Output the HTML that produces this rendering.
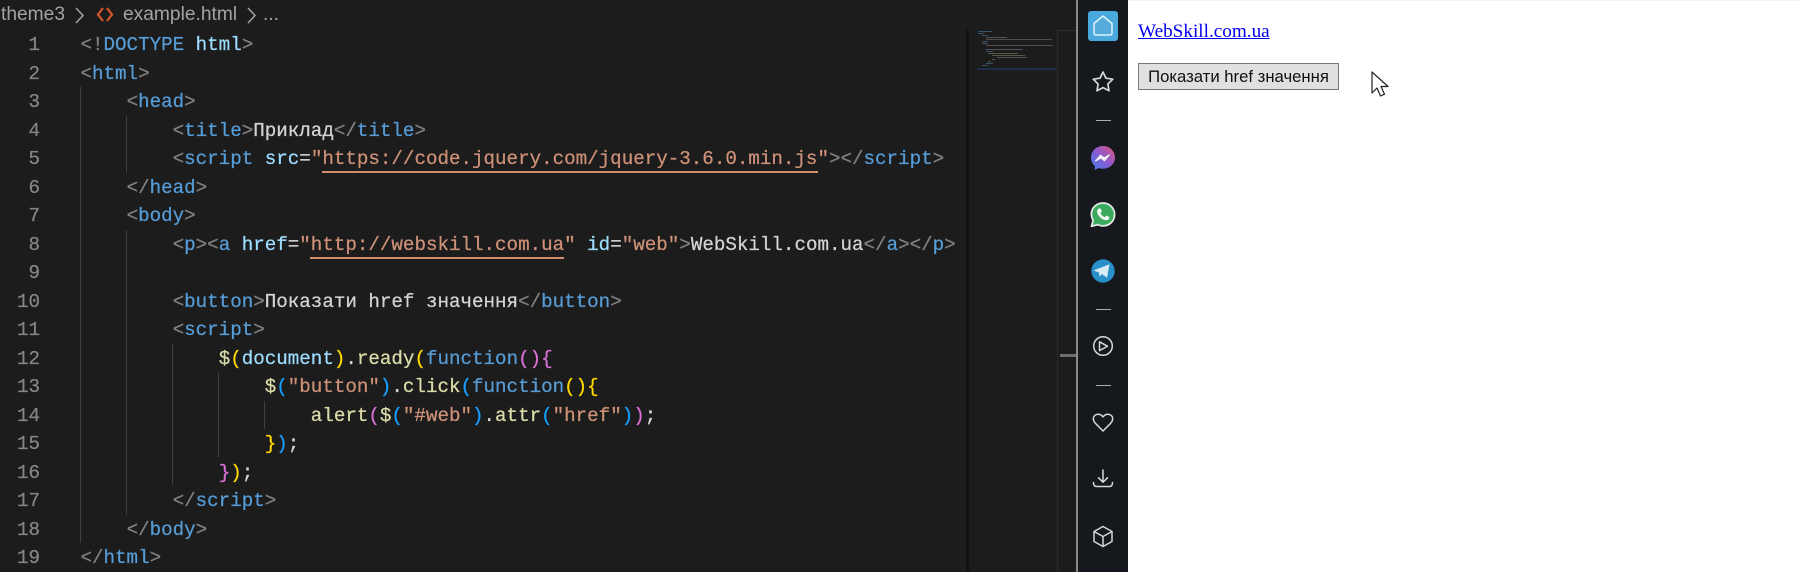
<!DOCTYPE html>
<html lang="uk"><head><meta charset="utf-8"><title>example.html</title>
<style>
html,body{margin:0;padding:0;width:1802px;height:572px;overflow:hidden;background:#fff}
#ed{position:absolute;left:0;top:0;width:1076px;height:572px;background:#1c1c1c;overflow:hidden}
.l{position:absolute;left:80.5px;white-space:pre;font:19.2px/28.5px "Liberation Mono","DejaVu Sans Mono",monospace;color:#d4d4d4;height:28.5px;-webkit-text-stroke:.25px currentColor}
.n{position:absolute;left:0;width:40px;text-align:right;font:19.2px/28.5px "Liberation Mono","DejaVu Sans Mono",monospace;color:#858585;-webkit-text-stroke:.25px currentColor}
.g{color:#808080}.t{color:#569cd6}.a{color:#9cdcfe}.s{color:#ce9178}.f{color:#dcdcaa}.y{color:#ffd700}.m{color:#da70d6}.b{color:#179fff}
.u{position:absolute;height:2px;background:#d08c6b}
.i{position:absolute;width:1px;background:#404040}
.bc{position:absolute;top:2px;font:19.2px/26px "Liberation Sans",sans-serif;color:#a3a3a3;white-space:pre}
.mm{position:absolute;height:1px;opacity:.5}
#side{position:absolute;left:1078px;top:0;width:50px;height:572px;background:#15191d}
#div{position:absolute;left:1076px;top:0;width:2px;height:572px;background:#8a8a8a}
.sep{position:absolute;left:18px;width:15px;height:1px;background:#a9acae}
#side svg{position:absolute;left:0;top:0}
#lnk{position:absolute;left:1138px;top:20px;font:19.2px/24px "Liberation Serif",serif;color:#00e;text-decoration:underline}
#btn{position:absolute;left:1138px;top:63px;width:201px;height:27px;box-sizing:border-box;border:1px solid #767676;background:#e0e0e0;font:16.7px/25px "Liberation Sans",sans-serif;color:#111;text-align:center;white-space:pre}
</style></head><body>
<div id="ed">
<div class="bc" style="left:1px">theme3</div>
<svg style="position:absolute;left:0;top:0" width="300" height="30" fill="none">
<path d="M76 8l7 7.500-7 7.500M248 8l7 7.500-7 7.500" stroke="#a3a3a3" stroke-width="1.500"/>
<path d="M103 8l-5 6.500 5 6.500M107 8l5 6.500-5 6.500" stroke="#d8562c" stroke-width="2.200"/>
</svg>
<div class="bc" style="left:123px">example.html</div>
<div class="bc" style="left:263px">...</div>

<div class="n" style="top:31px">1</div><div class="n" style="top:59.5px">2</div><div class="n" style="top:88px">3</div><div class="n" style="top:116.5px">4</div><div class="n" style="top:145px">5</div><div class="n" style="top:173.5px">6</div><div class="n" style="top:202px">7</div><div class="n" style="top:230.5px">8</div><div class="n" style="top:259px">9</div><div class="n" style="top:287.5px">10</div><div class="n" style="top:316px">11</div><div class="n" style="top:344.5px">12</div><div class="n" style="top:373px">13</div><div class="n" style="top:401.5px">14</div><div class="n" style="top:430px">15</div><div class="n" style="top:458.5px">16</div><div class="n" style="top:487px">17</div><div class="n" style="top:515.5px">18</div><div class="n" style="top:544px">19</div>

<div class="i" style="left:80px;top:87px;height:456px"></div>
<div class="i" style="left:126px;top:116px;height:57px"></div>
<div class="i" style="left:126px;top:230px;height:285px"></div>
<div class="i" style="left:172px;top:344px;height:141px"></div>
<div class="i" style="left:218px;top:372px;height:85px"></div>
<div class="i" style="left:264px;top:401px;height:28px"></div>

<div class="l" style="top:31px"><span class="g">&lt;!</span><span class="t">DOCTYPE</span> <span class="a">html</span><span class="g">&gt;</span></div>
<div class="l" style="top:59.5px"><span class="g">&lt;</span><span class="t">html</span><span class="g">&gt;</span></div>
<div class="l" style="top:88px">    <span class="g">&lt;</span><span class="t">head</span><span class="g">&gt;</span></div>
<div class="l" style="top:116.5px">        <span class="g">&lt;</span><span class="t">title</span><span class="g">&gt;</span>Приклад<span class="g">&lt;/</span><span class="t">title</span><span class="g">&gt;</span></div>
<div class="l" style="top:145px">        <span class="g">&lt;</span><span class="t">script</span> <span class="a">src</span>=<span class="s">"https://code.jquery.com/jquery-3.6.0.min.js"</span><span class="g">&gt;&lt;/</span><span class="t">script</span><span class="g">&gt;</span></div>
<div class="l" style="top:173.5px">    <span class="g">&lt;/</span><span class="t">head</span><span class="g">&gt;</span></div>
<div class="l" style="top:202px">    <span class="g">&lt;</span><span class="t">body</span><span class="g">&gt;</span></div>
<div class="l" style="top:230.5px">        <span class="g">&lt;</span><span class="t">p</span><span class="g">&gt;&lt;</span><span class="t">a</span> <span class="a">href</span>=<span class="s">"http://webskill.com.ua"</span> <span class="a">id</span>=<span class="s">"web"</span><span class="g">&gt;</span>WebSkill.com.ua<span class="g">&lt;/</span><span class="t">a</span><span class="g">&gt;&lt;/</span><span class="t">p</span><span class="g">&gt;</span></div>
<div class="l" style="top:287.5px">        <span class="g">&lt;</span><span class="t">button</span><span class="g">&gt;</span>Показати href значення<span class="g">&lt;/</span><span class="t">button</span><span class="g">&gt;</span></div>
<div class="l" style="top:316px">        <span class="g">&lt;</span><span class="t">script</span><span class="g">&gt;</span></div>
<div class="l" style="top:344.5px">            <span class="f">$</span><span class="y">(</span><span class="a">document</span><span class="y">)</span>.<span class="f">ready</span><span class="y">(</span><span class="t">function</span><span class="m">()</span><span class="m">{</span></div>
<div class="l" style="top:373px">                <span class="f">$</span><span class="b">(</span><span class="s">"button"</span><span class="b">)</span>.<span class="f">click</span><span class="b">(</span><span class="t">function</span><span class="y">()</span><span class="y">{</span></div>
<div class="l" style="top:401.5px">                    <span class="f">alert</span><span class="m">(</span><span class="f">$</span><span class="b">(</span><span class="s">"#web"</span><span class="b">)</span>.<span class="f">attr</span><span class="b">(</span><span class="s">"href"</span><span class="b">)</span><span class="m">)</span>;</div>
<div class="l" style="top:430px">                <span class="y">}</span><span class="b">)</span>;</div>
<div class="l" style="top:458.5px">            <span class="m">}</span><span class="y">)</span>;</div>
<div class="l" style="top:487px">        <span class="g">&lt;/</span><span class="t">script</span><span class="g">&gt;</span></div>
<div class="l" style="top:515.5px">    <span class="g">&lt;/</span><span class="t">body</span><span class="g">&gt;</span></div>
<div class="l" style="top:544px"><span class="g">&lt;/</span><span class="t">html</span><span class="g">&gt;</span></div>

<div class="u" style="left:322px;top:171px;width:496px"></div>
<div class="u" style="left:310px;top:257px;width:254px"></div>

<div style="position:absolute;left:966px;top:30px;width:3px;height:542px;background:#111"></div>
<div class="mm" style="left:978px;top:31px;width:14px;background:#5b87b0"></div>
<div class="mm" style="left:978px;top:33px;width:6px;background:#5b87b0"></div>
<div class="mm" style="left:982px;top:35px;width:6px;background:#5b87b0"></div>
<div class="mm" style="left:986px;top:37px;width:21px;background:#7d8f9c"></div>
<div class="mm" style="left:986px;top:39px;width:66px;background:#8f7a6d"></div>
<div class="mm" style="left:982px;top:41px;width:6px;background:#5b87b0"></div>
<div class="mm" style="left:982px;top:43px;width:6px;background:#5b87b0"></div>
<div class="mm" style="left:986px;top:45px;width:67px;background:#8f7a6d"></div>
<div class="mm" style="left:986px;top:49px;width:37px;background:#7d8f9c"></div>
<div class="mm" style="left:986px;top:51px;width:7px;background:#5b87b0"></div>
<div class="mm" style="left:988px;top:53px;width:30px;background:#8f8f70"></div>
<div class="mm" style="left:992px;top:55px;width:33px;background:#8f8f70"></div>
<div class="mm" style="left:997px;top:57px;width:30px;background:#8f8f70"></div>
<div class="mm" style="left:992px;top:59px;width:3px;background:#8f8f70"></div>
<div class="mm" style="left:988px;top:61px;width:3px;background:#8f8f70"></div>
<div class="mm" style="left:986px;top:63px;width:7px;background:#5b87b0"></div>
<div class="mm" style="left:982px;top:65px;width:6px;background:#5b87b0"></div>
<div style="position:absolute;left:977px;top:68px;width:80px;height:2px;background:#1d3048"></div>
<div style="position:absolute;left:1057px;top:30px;width:1px;height:542px;background:#2a2a2a"></div>
<div style="position:absolute;left:1057px;top:30px;width:19px;height:1px;background:#2e2e2e"></div>
<div style="position:absolute;left:1060px;top:354px;width:16px;height:3px;background:#6e6e6e"></div>
</div>
<div id="div"></div>

<div id="side">
<svg width="50" height="572" fill="none" stroke="#d5d7d8" stroke-width="1.500" stroke-linejoin="round" stroke-linecap="round">
<rect x="10" y="11" width="30" height="30" rx="3" fill="#4aa9dc" stroke="none"/>
<path d="M25 16l-9 7.500v9.500q0 2 2 2h14q2 0 2-2v-9.500z" stroke="#dff2fb" fill="#55acdc"/>
<path d="M25 72l3 6.200 6.800 1-4.900 4.800 1.100 6.800-6-3.200-6 3.200 1.100-6.800-4.900-4.800 6.800-1z" stroke-width="1.700"/>
<defs>
<linearGradient id="ms" x1="0" y1="1" x2="1" y2="0"><stop offset="0" stop-color="#3f7fe8"/><stop offset=".5" stop-color="#8a5ad0"/><stop offset="1" stop-color="#e0587c"/></linearGradient>
</defs>
<path d="M25 146c-6.800 0-12 5-12 11.500 0 3.400 1.400 6.400 3.800 8.500v4l3.700-2c1.400.5 2.900.7 4.500.7 6.800 0 12-5 12-11.200S31.800 146 25 146z" fill="url(#ms)" stroke="none"/>
<path d="M17.500 161l5-6 3.500 2.800 5.500-3-5 6-3.500-2.800z" fill="#f2f2f8" stroke="#f2f2f8" stroke-width="1"/>
<path d="M25 203c-6.600 0-11.600 5-11.600 11.200 0 2.200.6 4.200 1.800 6l-1.700 6 6.300-1.600c1.600.9 3.400 1.300 5.200 1.300 6.500 0 11.600-5.100 11.600-11.400S31.500 203 25 203z" fill="#3aaa5c" stroke="#e4e8e4" stroke-width="1.800"/>
<path d="M21 208.500c-.8.400-2 1.600-1.900 3.300.2 3.700 4.600 8 8.600 8.500 1.800.2 3-.9 3.400-1.700.3-.8.300-1.400.1-1.600l-2.800-1.500-1.500 1.600c-2-.5-3.700-2.200-4.500-4.200l1.500-1.500-1.300-3z" fill="#f2f5f2" stroke="none"/>
<circle cx="25" cy="271" r="11.700" fill="#2a8fc8" stroke="none"/>
<path d="M15.500 270.500l16-6.300-2.500 13.600-5-3.700-2.500 2.400-.6-4.100z" fill="#d9ebf5" stroke="none"/>
<circle cx="25" cy="346" r="9.300"/>
<path d="M21.500 341.800l8 4.400-8 4.400z"/>
<path d="M25 431l-7.700-7.800c-2.400-2.500-2.600-5.800-.6-7.700 2-1.800 5.400-1.700 7.300.3l1 1 1-1c1.900-2 5.300-2.100 7.300-.3 2 1.900 1.800 5.200-.6 7.700z"/>
<path d="M25 470v12M20.500 477.800l4.500 4.400 4.500-4.400M15.500 482.500q0 4 3 4h13q3 0 3-4"/>
<path d="M25 526.500l9 5v10l-9 5-9-5v-10zM16 531.500l9 5 9-5M25 536.500v10"/>
</svg>
<div class="sep" style="top:120px"></div>
<div class="sep" style="top:309px"></div>
<div class="sep" style="top:385px"></div>
</div>

<div style="position:absolute;left:1128px;top:0;width:674px;height:1px;background:#fdeefb"></div>
<a id="lnk">WebSkill.com.ua</a>
<div id="btn">Показати href значення</div>
<svg style="position:absolute;left:1370px;top:70px" width="20" height="30"><path d="M2 2v21l5-5 3.500 8 4-1.800-3.500-7.700h7z" fill="#fff" stroke="#222" stroke-width="1.200" stroke-linejoin="round"/></svg>
</body></html>
